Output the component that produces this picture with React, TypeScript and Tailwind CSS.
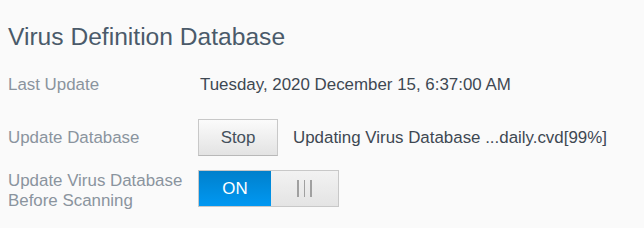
import React from "react";

export default function App() {
  const font = { fontFamily: '"Liberation Sans", Arial, sans-serif' };
  return (
    <div
      className="w-[644px] h-[228px] bg-[#fafafa] pl-[8px] pt-[22px] overflow-hidden"
      style={font}
    >
      <div className="text-[24.6px] leading-[30px] text-[#4a5a6a]">Virus Definition Database</div>

      <div className="mt-[21px] flex items-center h-[24px] text-[16.9px]">
        <div className="w-[190px] text-[#8a949e]">Last Update</div>
        <div className="pl-[2px] text-[#3e4852]">Tuesday, 2020 December 15, 6:37:00 AM</div>
      </div>

      <div className="mt-[22px] flex items-center h-[37px] text-[16.9px]">
        <div className="w-[190px] text-[#8a949e]">Update Database</div>
        <button className="w-[80px] h-[37px] border border-[#c8c8c8] border-b-[#b8b8b8] bg-gradient-to-b from-[#fbfbfb] to-[#e3e3e3] text-[#44505c] text-[16.9px]">
          Stop
        </button>
        <div className="ml-[15px] text-[#3e4852]">Updating Virus Database ...daily.cvd[99%]</div>
      </div>

      <div className="mt-[14px] flex items-start text-[16.9px]">
        <div className="w-[190px] mt-[1px] leading-[20px] text-[#8a949e]">
          Update Virus Database
          <br />
          Before Scanning
        </div>
        <div className="flex w-[141px] h-[37px] border border-[#c8c8c8]">
          <div className="w-[72px] h-full flex items-center justify-center bg-gradient-to-b from-[#0080cc] to-[#0098f2] text-white">
            ON
          </div>
          <div className="flex-1 h-full flex items-center justify-center gap-[5px] bg-gradient-to-b from-[#f2f2f2] to-[#e4e4e4]">
            <span className="block w-[1.5px] h-[17px] bg-[#a0a0a0]" />
            <span className="block w-[1.5px] h-[17px] bg-[#a0a0a0]" />
            <span className="block w-[1.5px] h-[17px] bg-[#a0a0a0]" />
          </div>
        </div>
      </div>
    </div>
  );
}
